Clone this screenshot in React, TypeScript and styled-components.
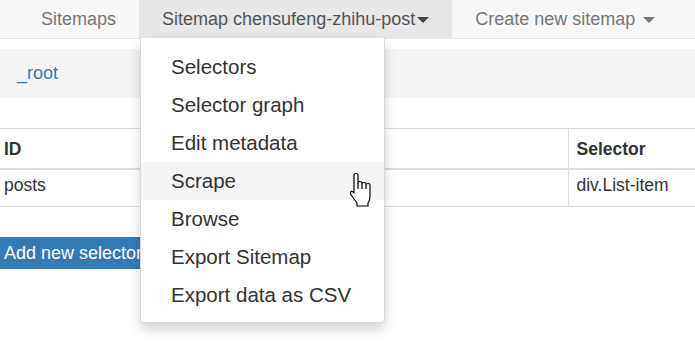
import styled, { createGlobalStyle } from "styled-components"

const GlobalStyle = createGlobalStyle`
    html, body {
        margin: 0;
        padding: 0;
        background: #ffffff;
        font-family: "Liberation Sans", Arial, sans-serif;
        color: #333333;
        overflow: hidden;
    }
`

const menuItems = [
    "Selectors",
    "Selector graph",
    "Edit metadata",
    "Scrape",
    "Browse",
    "Export Sitemap",
    "Export data as CSV",
]

export default function App() {
    return (
        <Page>
            <GlobalStyle />
            <Navbar>
                <NavItem>Sitemaps</NavItem>
                <NavItem active>
                    Sitemap chensufeng-zhihu-post<Caret dark gap={2} />
                    <Dropdown>
                        {menuItems.map((item) => (
                            <DropdownItem key={item} hover={item === "Scrape"}>
                                {item}
                            </DropdownItem>
                        ))}
                        <HandCursor />
                    </Dropdown>
                </NavItem>
                <NavItem>
                    Create new sitemap<Caret gap={8} />
                </NavItem>
            </Navbar>

            <Breadcrumb>
                <CrumbLink>_root</CrumbLink>
            </Breadcrumb>

            <Table>
                <colgroup>
                    <col style={{ width: 200 }} />
                    <col style={{ width: 368 }} />
                    <col />
                </colgroup>
                <thead>
                    <tr>
                        <Th>ID</Th>
                        <Th></Th>
                        <Th>Selector</Th>
                    </tr>
                </thead>
                <tbody>
                    <tr>
                        <Td>posts</Td>
                        <Td></Td>
                        <Td>div.List-item</Td>
                    </tr>
                </tbody>
            </Table>

            <AddButton>Add new selector</AddButton>
        </Page>
    )
}

function HandCursor() {
    return (
        <CursorSvg width="24" height="36" viewBox="0 0 24 36">
            <path
                d="M5 19 L5 3.5 Q5 1.5 7 1.5 Q9 1.5 9 3.5 L9 11 Q9 9.5 11 9.5 Q13 9.5 13 11 L13 12 Q13 10.5 15 10.5 Q17 10.5 17 12 L17 13 Q17 11.5 19 11.5 Q21 11.5 21 13 L21 24 Q21 28 19 31 L19 34 L8 34 L8 31 Q5 27 2.5 23.5 Q0.8 21 1.8 19.8 Q3 18.6 5 21 Z"
                fill="#ffffff"
                stroke="#000000"
                strokeWidth="1.2"
                strokeLinejoin="round"
            />
            <path d="M9 11 L9 17 M13 12 L13 17 M17 13 L17 17" stroke="#000000" strokeWidth="1.2" fill="none" />
        </CursorSvg>
    )
}

const Page = styled.div`
    width: 695px;
    height: 345px;
    position: relative;
`

const Navbar = styled.div`
    height: 38px;
    background: #f8f8f8;
    border-bottom: 1px solid #e7e7e7;
    display: flex;
    align-items: stretch;
    padding-left: 18px;
`

const NavItem = styled.div<{ active?: boolean }>`
    position: relative;
    display: flex;
    align-items: center;
    padding: 1px 23px 0;
    font-size: 18px;
    color: ${(p) => (p.active ? "#555555" : "#777777")};
    background: ${(p) => (p.active ? "#e7e7e7" : "transparent")};
    white-space: nowrap;
`

const Caret = styled.span<{ dark?: boolean; gap: number }>`
    display: inline-block;
    margin-left: ${(p) => p.gap}px;
    width: 0;
    height: 0;
    border-top: 6px solid ${(p) => (p.dark ? "#444444" : "#777777")};
    border-left: 6px solid transparent;
    border-right: 6px solid transparent;
`

const Dropdown = styled.div`
    position: absolute;
    top: 100%;
    left: 1px;
    width: 243px;
    padding: 10px 0 8px;
    background: #ffffff;
    border: 1px solid rgba(0, 0, 0, 0.15);
    border-top: none;
    border-radius: 0 0 4px 4px;
    box-shadow: 0 6px 12px rgba(0, 0, 0, 0.175);
    z-index: 10;
`

const DropdownItem = styled.div<{ hover?: boolean }>`
    height: 38px;
    line-height: 38px;
    padding: 0 30px;
    font-size: 20.5px;
    color: #333333;
    background: ${(p) => (p.hover ? "#f5f5f5" : "transparent")};
`

const CursorSvg = styled.svg`
    position: absolute;
    left: 208px;
    top: 134px;
`

const Breadcrumb = styled.div`
    margin-top: 10px;
    height: 49px;
    background: #f5f5f5;
    display: flex;
    align-items: center;
    padding-left: 17px;
`

const CrumbLink = styled.span`
    font-size: 18px;
    color: #337ab7;
`

const Table = styled.table`
    margin-top: 30px;
    width: 100%;
    table-layout: fixed;
    border-collapse: collapse;
    font-size: 17.5px;
    color: #333333;

    th + th + th,
    td + td + td {
        border-left: 1px solid #dddddd;
    }
`

const Th = styled.th`
    text-align: left;
    font-weight: bold;
    line-height: 22px;
    padding: 9px 4px 8px 8px;
    border-top: 1px solid #dddddd;
    border-bottom: 2px solid #dddddd;
    white-space: nowrap;

    &:first-child {
        padding-left: 4px;
    }
`

const Td = styled.td`
    vertical-align: top;
    line-height: 22px;
    padding: 4px 4px 10px 8px;
    border-bottom: 1px solid #dddddd;
    box-sizing: border-box;
    height: 36px;
    white-space: nowrap;

    &:first-child {
        padding-left: 4px;
    }
`

const AddButton = styled.button`
    display: block;
    margin-top: 30px;
    height: 32px;
    padding: 0 12px 0 4px;
    border: none;
    border-radius: 0 4px 4px 0;
    background: #337ab7;
    color: #ffffff;
    font-family: "Liberation Sans", Arial, sans-serif;
    font-size: 18px;
`
